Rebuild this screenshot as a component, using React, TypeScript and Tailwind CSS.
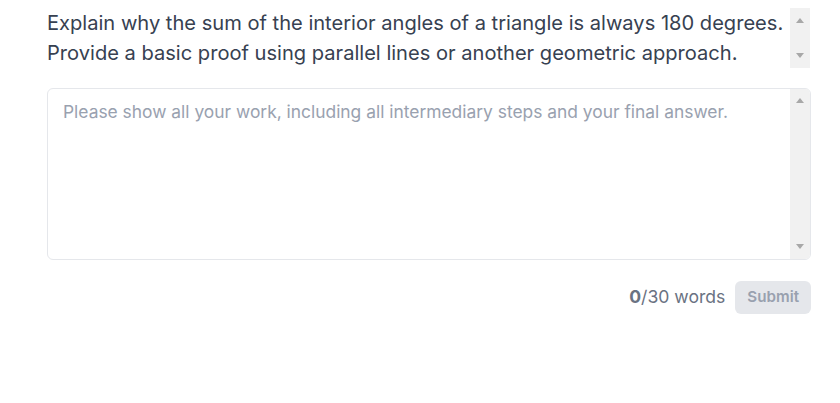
import React, { useState } from 'react';

const ScrollTrack: React.FC<{ upPad: string; downPad: string }> = ({ upPad, downPad }) => (
  <div className={`flex w-[20px] shrink-0 flex-col items-center justify-between bg-[#f1f1f1] ${upPad} ${downPad}`}>
    <svg width="8" height="5" viewBox="0 0 8 5">
      <path d="M0 5 L4 0 L8 5 Z" fill="#a8a8a8" />
    </svg>
    <svg width="8" height="5" viewBox="0 0 8 5">
      <path d="M0 0 L4 5 L8 0 Z" fill="#a8a8a8" />
    </svg>
  </div>
);

const App: React.FC = () => {
  const [answer, setAnswer] = useState('');
  const words = answer.trim() ? answer.trim().split(/\s+/).length : 0;

  return (
    <div className="w-full h-[403px] bg-white" style={{ fontFamily: 'Inter, "Liberation Sans", sans-serif' }}>
      <div className="ml-[47px] w-[764px] pt-2 flex flex-col">
        <div className="flex h-[60px] pr-[1px]">
          <div className="flex-1 overflow-hidden text-[20.1px] leading-[30px] text-[#374151]">
            Explain why the sum of the interior angles of a triangle is always 180 degrees. Provide a basic proof using
            parallel lines or another geometric approach.
          </div>
          <ScrollTrack upPad="pt-[10px]" downPad="pb-[10px]" />
        </div>

        <div className="mt-5 flex h-[172px] overflow-hidden rounded-md border border-gray-200">
          <textarea
            value={answer}
            onChange={(e) => setAnswer(e.target.value)}
            placeholder="Please show all your work, including all intermediary steps and your final answer."
            className="h-full flex-1 resize-none px-[15px] py-[11px] text-[17.4px] leading-6 text-gray-700 placeholder:text-gray-400 outline-none"
          />
          <ScrollTrack upPad="pt-[9px]" downPad="pb-[10px]" />
        </div>

        <div className="mt-[21px] flex items-center justify-end gap-[10px]">
          <span className="text-[17.6px] text-gray-500">
            <span className="font-bold">{words}</span>/30 words
          </span>
          <button
            disabled
            className="h-[33px] rounded-md bg-gray-200 px-3 text-[15.2px] font-semibold text-gray-400"
          >
            Submit
          </button>
        </div>
      </div>
    </div>
  );
};

export default App;
